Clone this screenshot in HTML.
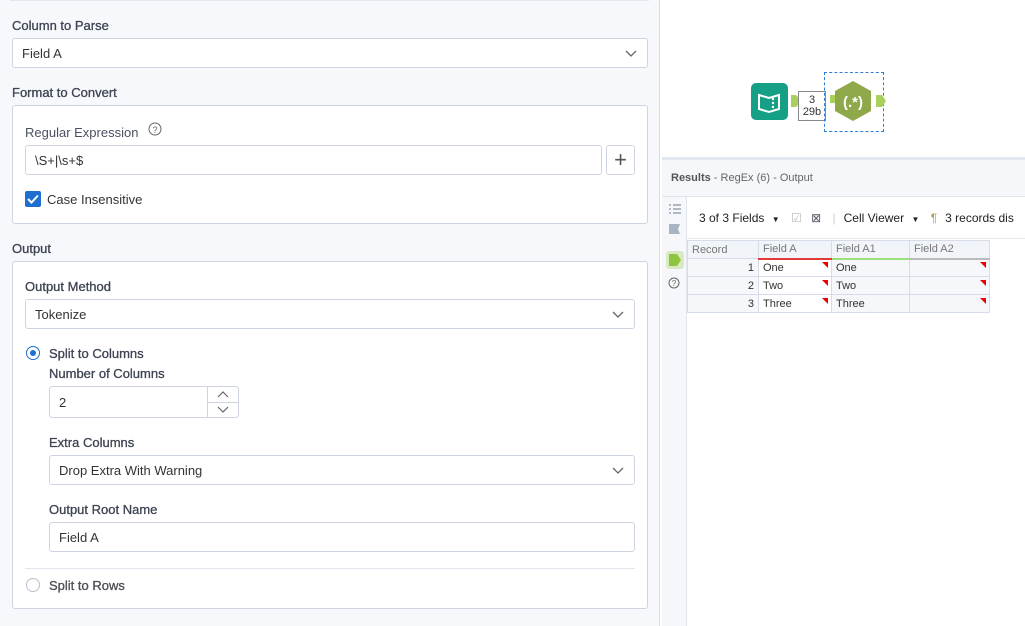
<!DOCTYPE html>
<html><head><style>
*{box-sizing:border-box;margin:0;padding:0}
body{width:1025px;height:626px;overflow:hidden;font-family:"Liberation Sans",sans-serif;font-size:13px;color:#333;background:#fff;position:relative}
.a{position:absolute}
#left{left:0;top:0;width:660px;height:626px;background:#f6f8fc;border-right:1px solid #d8dde6}
.lbl{position:absolute;font-size:13px;color:#3d4352;font-weight:normal;-webkit-text-stroke:0.3px #3d4352}
.lbl2{position:absolute;font-size:13px;color:#4a5060}
.box{position:absolute;background:#fff;border:1px solid #cfd5e0;border-radius:3px}
.inp{position:absolute;background:#fff;border:1px solid #cfd5e0;border-radius:3px;font-size:13px;color:#333;padding-left:9px;display:flex;align-items:center}
.chev{position:absolute;right:10px;top:50%;margin-top:-6px}
td,th{border:1px solid #d6dde8;font-size:11px;height:18px;padding:0 4px;font-weight:normal}
</style></head><body>
<div id="left" class="a">
<div class="a" style="left:10px;right:10px;top:0;height:1px;background:#e3e7ef"></div>
<div class="lbl" style="left:12px;top:18px">Column to Parse</div>
<div class="inp" style="left:12px;top:38px;width:636px;height:30px">Field A<svg class="chev" width="12" height="12"><path d="M1 4l5 5 5-5" stroke="#666" fill="none" stroke-width="1.3"/></svg></div>
<div class="lbl" style="left:12px;top:85px">Format to Convert</div>
<div class="box" style="left:12px;top:105px;width:636px;height:119px"></div>
<div class="lbl2" style="left:25px;top:125px">Regular Expression</div>
<svg class="a" style="left:148px;top:122px" width="14" height="14"><circle cx="7" cy="7" r="6" stroke="#666" fill="none"/><text x="7" y="11" font-size="9" text-anchor="middle" fill="#666" font-family="Liberation Sans">?</text></svg>
<div class="inp" style="left:25px;top:145px;width:577px;height:30px">\S+|\s+$</div>
<div class="inp" style="left:606px;top:145px;width:29px;height:30px;padding:0;justify-content:center;font-size:22px;color:#555;font-weight:300">+</div>
<div class="a" style="left:25px;top:191px;width:16px;height:16px;background:#1f6fd0;border-radius:2px"><svg width="16" height="16"><path d="M3 8l3.5 3.5L13 4.5" stroke="#fff" stroke-width="2" fill="none"/></svg></div>
<div class="lbl2" style="left:47px;top:192px;color:#333">Case Insensitive</div>
<div class="lbl" style="left:12px;top:241px">Output</div>
<div class="box" style="left:12px;top:261px;width:636px;height:348px"></div>
<div class="lbl" style="left:25px;top:279px">Output Method</div>
<div class="inp" style="left:25px;top:299px;width:610px;height:30px">Tokenize<svg class="chev" width="12" height="12"><path d="M1 4l5 5 5-5" stroke="#666" fill="none" stroke-width="1.3"/></svg></div>
<div class="a" style="left:26px;top:346px;width:14px;height:14px;border:1.5px solid #1f6fd0;border-radius:50%"><div class="a" style="left:2.5px;top:2.5px;width:6px;height:6px;background:#1f6fd0;border-radius:50%"></div></div>
<div class="lbl" style="left:49px;top:346px">Split to Columns</div>
<div class="lbl" style="left:49px;top:366px">Number of Columns</div>
<div class="inp" style="left:49px;top:386px;width:190px;height:32px">2</div>
<div class="a" style="left:207px;top:387px;width:1px;height:30px;background:#cfd5e0"></div>
<div class="a" style="left:207px;top:402px;width:31px;height:1px;background:#cfd5e0"></div>
<svg class="a" style="left:216px;top:389px" width="14" height="28"><path d="M2 8l5-5 5 5M2 18l5 5 5-5" stroke="#666" fill="none" stroke-width="1.2"/></svg>
<div class="lbl" style="left:49px;top:435px">Extra Columns</div>
<div class="inp" style="left:49px;top:455px;width:586px;height:30px">Drop Extra With Warning<svg class="chev" width="12" height="12"><path d="M1 4l5 5 5-5" stroke="#666" fill="none" stroke-width="1.3"/></svg></div>
<div class="lbl" style="left:49px;top:502px">Output Root Name</div>
<div class="inp" style="left:49px;top:522px;width:586px;height:30px">Field A</div>
<div class="a" style="left:25px;top:568px;width:610px;height:1px;background:#e1e5ec"></div>
<div class="a" style="left:26px;top:578px;width:14px;height:14px;border:1px solid #b8c0cc;border-radius:50%;background:#fff"></div>
<div class="lbl" style="left:49px;top:578px;color:#555">Split to Rows</div>
</div>
<!-- canvas -->
<div class="a" style="left:751px;top:83px;width:37px;height:37px;background:#15a085;border-radius:5px"><svg width="37" height="37"><path d="M8 12v14l10 3 10-3V12l-10 3z" stroke="#fff" fill="none" stroke-width="2"/><circle cx="22" cy="16" r="1.2" fill="#fff"/><circle cx="22" cy="20" r="1.2" fill="#fff"/><circle cx="22" cy="24" r="1.2" fill="#fff"/></svg></div>
<div class="a" style="left:791px;top:95px;width:7px;height:12px;background:#a8d05a;border-radius:0 3px 3px 0"></div>
<div class="a" style="left:798px;top:91px;width:28px;height:30px;border:1px solid #888;background:#fff;font-size:11px;line-height:12px;text-align:center;padding-top:2px">3<br>29b</div>
<div class="a" style="left:824px;top:72px;width:60px;height:60px;border:1px dashed #2f7fd4"></div>
<svg class="a" style="left:826px;top:78px" width="64" height="46"><path d="M4 17h5v8H4z" fill="#a8d05a"/><path d="M27 3l18 10v20L27 43 9 33V13z" fill="#8ea84a"/><text x="27" y="29" font-size="15" font-weight="bold" fill="#fff" text-anchor="middle" font-family="Liberation Sans">(.*)</text><path d="M50 17h6l4 6-4 6h-6z" fill="#a8d05a"/></svg>
<!-- results -->
<div class="a" style="left:662px;top:157px;width:363px;height:3px;background:#e3e8f0"></div>
<div class="a" style="left:662px;top:160px;width:363px;height:37px;background:#f5f7fa;border-bottom:1px solid #e0e5ed;font-size:11px;color:#666;padding:12px 0 0 9px"><b style="color:#555">Results</b> - RegEx (6) - Output</div>
<div class="a" style="left:662px;top:197px;width:25px;height:429px;background:#f5f7fa;border-right:1px solid #e0e5ed"></div>
<svg class="a" style="left:666px;top:202px" width="18" height="90"><path d="M3 3h2M7 3h8M3 7h2M7 7h8M3 11h2M7 11h8" stroke="#6a7a90"/><path d="M3 22h11l-2 5 2 5H3z" fill="#a8b4c4"/><rect x="0" y="49" width="18" height="18" rx="3" fill="#dbe9c2"/><path d="M3 52h8l4 6-4 6H3z" fill="#8ec540"/><circle cx="8" cy="81" r="5" stroke="#666" fill="none"/><text x="8" y="84" font-size="8" text-anchor="middle" fill="#666">?</text></svg>
<div class="a" style="left:687px;top:197px;width:338px;height:42px;border-bottom:1px solid #e6eaf0;font-size:12px;color:#222;padding-top:14px;white-space:nowrap">
<span style="margin-left:12px">3 of 3 Fields</span> <span style="font-size:8px;margin-left:4px">▼</span>
<span style="color:#bbb;margin-left:8px">☑</span> <span style="color:#556;margin-left:6px">⊠</span>
<span style="color:#ccc;margin-left:8px">|</span><span style="margin-left:8px">Cell Viewer</span> <span style="font-size:8px;margin-left:4px">▼</span>
<span style="color:#b89a5a;margin-left:8px">¶</span><span style="margin-left:8px">3 records dis</span></div>
<table class="a" style="left:687px;top:240px;border-collapse:collapse;color:#333">
<tr style="background:#f1f4f8;color:#777"><th style="width:71px;text-align:left">Record</th><th style="width:73px;text-align:left;border-bottom:2px solid #e53935">Field A</th><th style="width:78px;text-align:left;border-bottom:2px solid #9be07a">Field A1</th><th style="width:80px;text-align:left;border-bottom:2px solid #bbb">Field A2</th></tr>
<tr style="background:#f5f7fb"><td style="text-align:right">1</td><td style="background:#fff">One</td><td>One</td><td></td></tr>
<tr style="background:#f5f7fb"><td style="text-align:right">2</td><td style="background:#fff">Two</td><td>Two</td><td></td></tr>
<tr style="background:#f5f7fb"><td style="text-align:right">3</td><td style="background:#fff">Three</td><td>Three</td><td></td></tr>
</table>
<svg class="a" style="left:822px;top:262px" width="170" height="50"><path d="M0 0h6v6zM158 0h6v6zM0 18h6v6zM158 18h6v6zM0 36h6v6zM158 36h6v6z" fill="#e00"/></svg>
</body></html>
